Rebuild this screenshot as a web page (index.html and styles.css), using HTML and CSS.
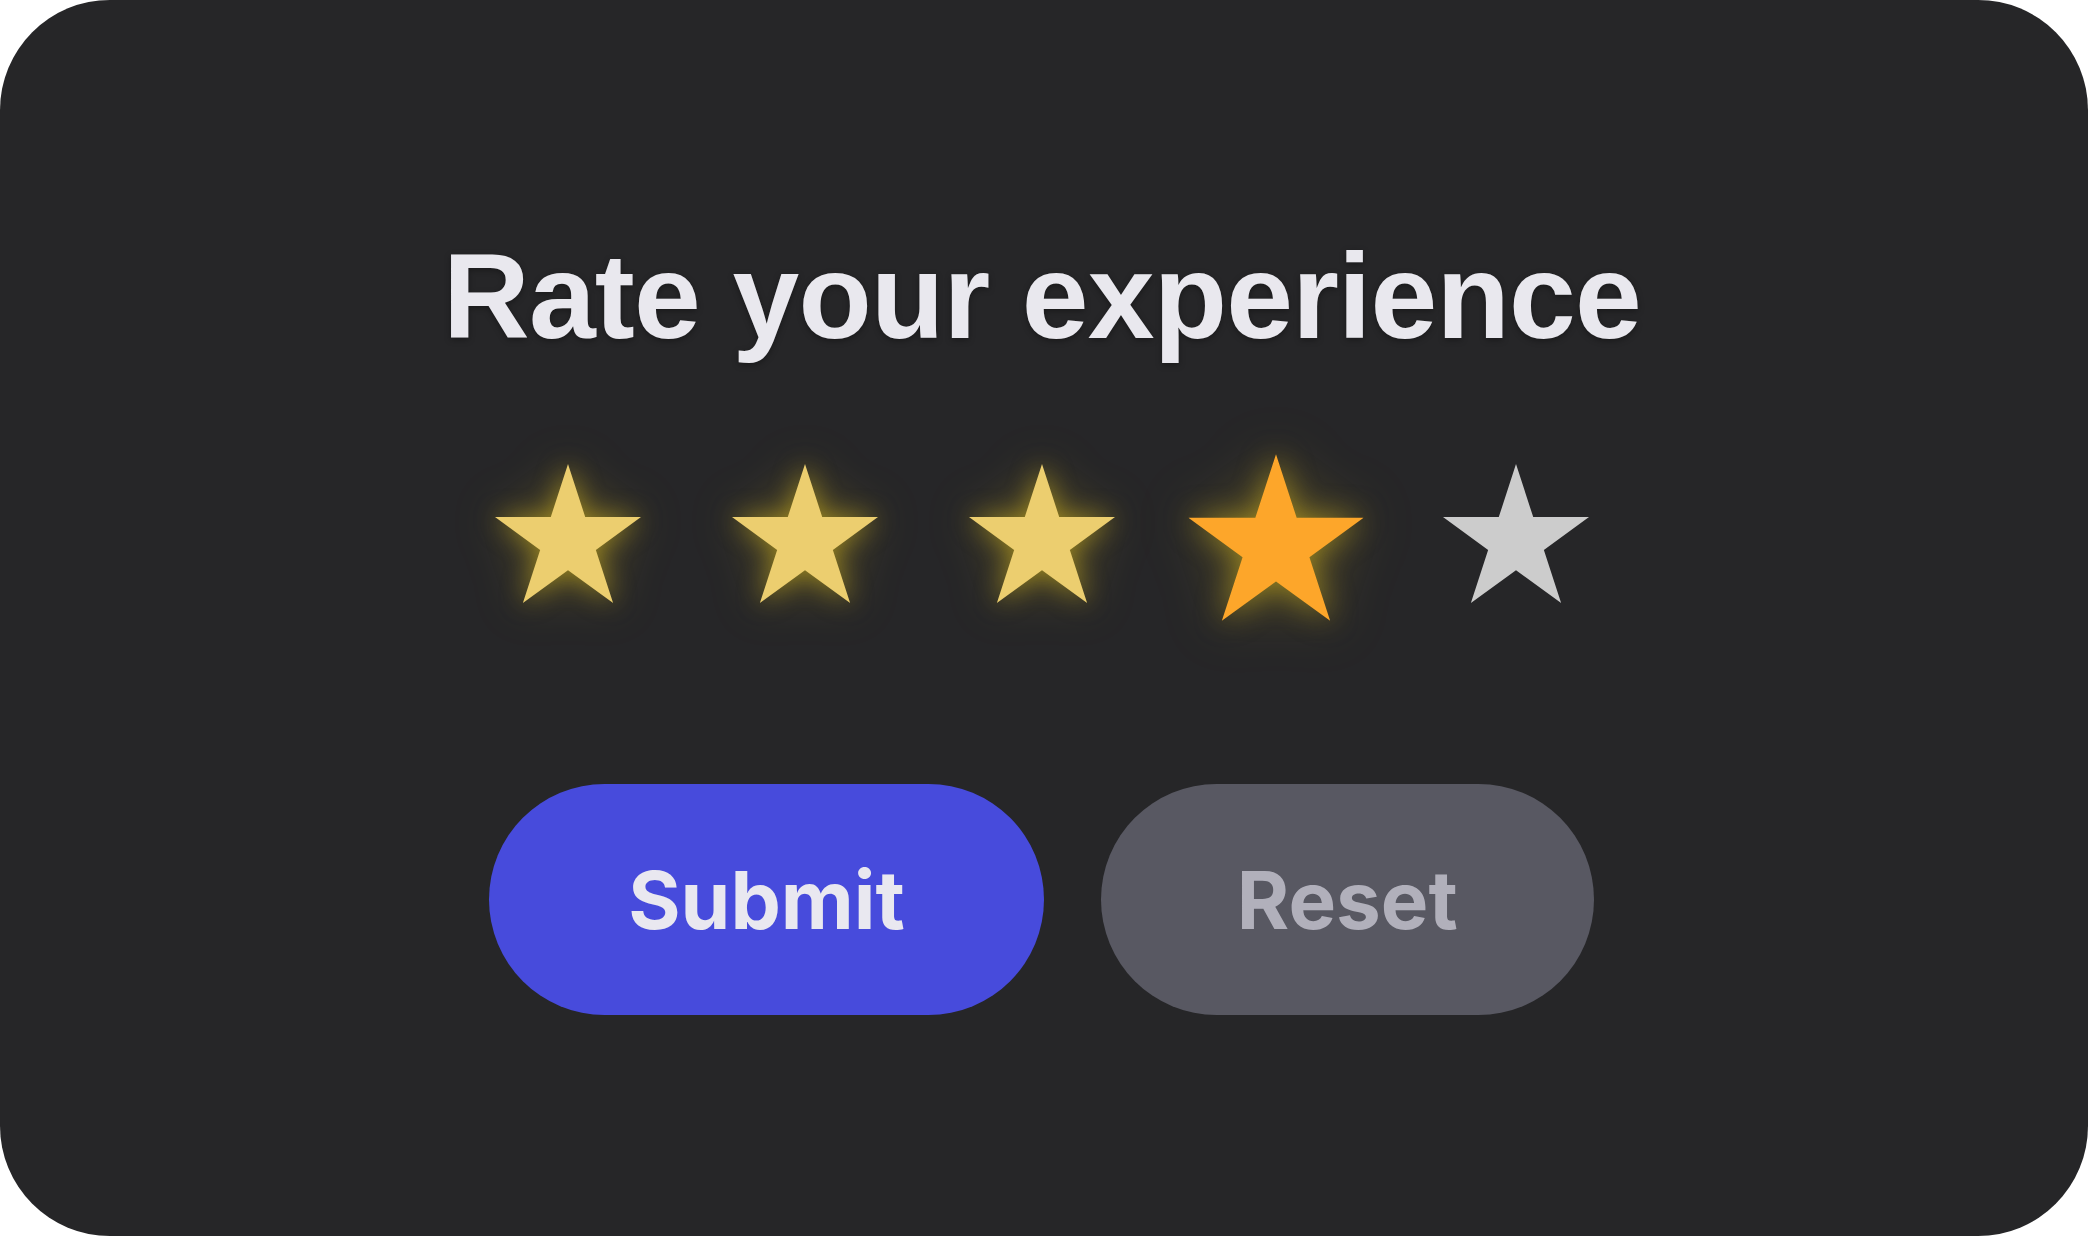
FILE: index.html
```html
<!DOCTYPE html>
<html lang="en">
<head>
<meta charset="utf-8">
<title>Rate your experience</title>
<link rel="stylesheet" href="styles.css">
</head>
<body>
<main class="card">
  <h1 class="title">Rate your experience</h1>
  <div class="stars">
    <svg class="star star-on" viewBox="0 0 100 95.11" aria-hidden="true"><polygon points="50,0 61.8,36.33 100,36.33 69.09,58.78 80.9,95.11 50,72.66 19.1,95.11 30.91,58.78 0,36.33 38.2,36.33"/></svg>
    <svg class="star star-on" viewBox="0 0 100 95.11" aria-hidden="true"><polygon points="50,0 61.8,36.33 100,36.33 69.09,58.78 80.9,95.11 50,72.66 19.1,95.11 30.91,58.78 0,36.33 38.2,36.33"/></svg>
    <svg class="star star-on" viewBox="0 0 100 95.11" aria-hidden="true"><polygon points="50,0 61.8,36.33 100,36.33 69.09,58.78 80.9,95.11 50,72.66 19.1,95.11 30.91,58.78 0,36.33 38.2,36.33"/></svg>
    <svg class="star star-hover" viewBox="0 0 100 95.11" aria-hidden="true"><polygon points="50,0 61.8,36.33 100,36.33 69.09,58.78 80.9,95.11 50,72.66 19.1,95.11 30.91,58.78 0,36.33 38.2,36.33"/></svg>
    <svg class="star star-off" viewBox="0 0 100 95.11" aria-hidden="true"><polygon points="50,0 61.8,36.33 100,36.33 69.09,58.78 80.9,95.11 50,72.66 19.1,95.11 30.91,58.78 0,36.33 38.2,36.33"/></svg>
  </div>
  <div class="actions">
    <button class="btn btn-primary" type="button">Submit</button>
    <button class="btn btn-secondary" type="button">Reset</button>
  </div>
</main>
</body>
</html>
```
FILE: styles.css
```css
html, body {
  margin: 0;
  padding: 0;
  background: #ffffff;
}

.card {
  box-sizing: border-box;
  width: 2088px;
  height: 1236px;
  border-radius: 110px;
  background: #262628;
  display: flex;
  flex-direction: column;
  align-items: center;
  padding-top: 229px;
  overflow: hidden;
}

.title {
  margin: 0 0 0 -4px;
  font-family: "Liberation Sans", Arial, sans-serif;
  font-weight: 700;
  font-size: 120px;
  line-height: 134px;
  letter-spacing: -0.8px;
  color: #e9e8ee;
  text-shadow: 0 2px 6px rgba(0, 0, 0, 0.35);
}

.stars {
  display: flex;
  gap: 91px;
  margin-top: 101px;
  padding-right: 5px;
}

.star {
  width: 146px;
  height: 139px;
  display: block;
}

.star-on {
  fill: #ecce6f;
  filter: drop-shadow(0 0 12px rgba(215, 185, 30, 0.55)) drop-shadow(0 0 24px rgba(200, 170, 30, 0.35));
}

.star-hover {
  fill: #fda62a;
  filter: drop-shadow(0 0 12px rgba(215, 185, 30, 0.55)) drop-shadow(0 0 24px rgba(200, 170, 30, 0.35));
  transform: translate(-3px, 4px) scale(1.2);
}

.star-off {
  fill: #cccccc;
}

.actions {
  display: flex;
  gap: 57px;
  margin-top: 181px;
  padding-right: 5px;
}

.btn {
  height: 231px;
  padding: 0 139px;
  border: 0;
  border-radius: 999px;
  font-family: Inter, "Noto Sans", sans-serif;
  font-weight: 700;
  font-size: 80px;
  line-height: 1;
  display: flex;
  align-items: center;
  justify-content: center;
}

.btn-primary {
  background: #474bdc;
  color: #e9e8f0;
}

.btn-secondary {
  padding: 0 136px;
  background: #585862;
  color: #b1b0bb;
}
```
